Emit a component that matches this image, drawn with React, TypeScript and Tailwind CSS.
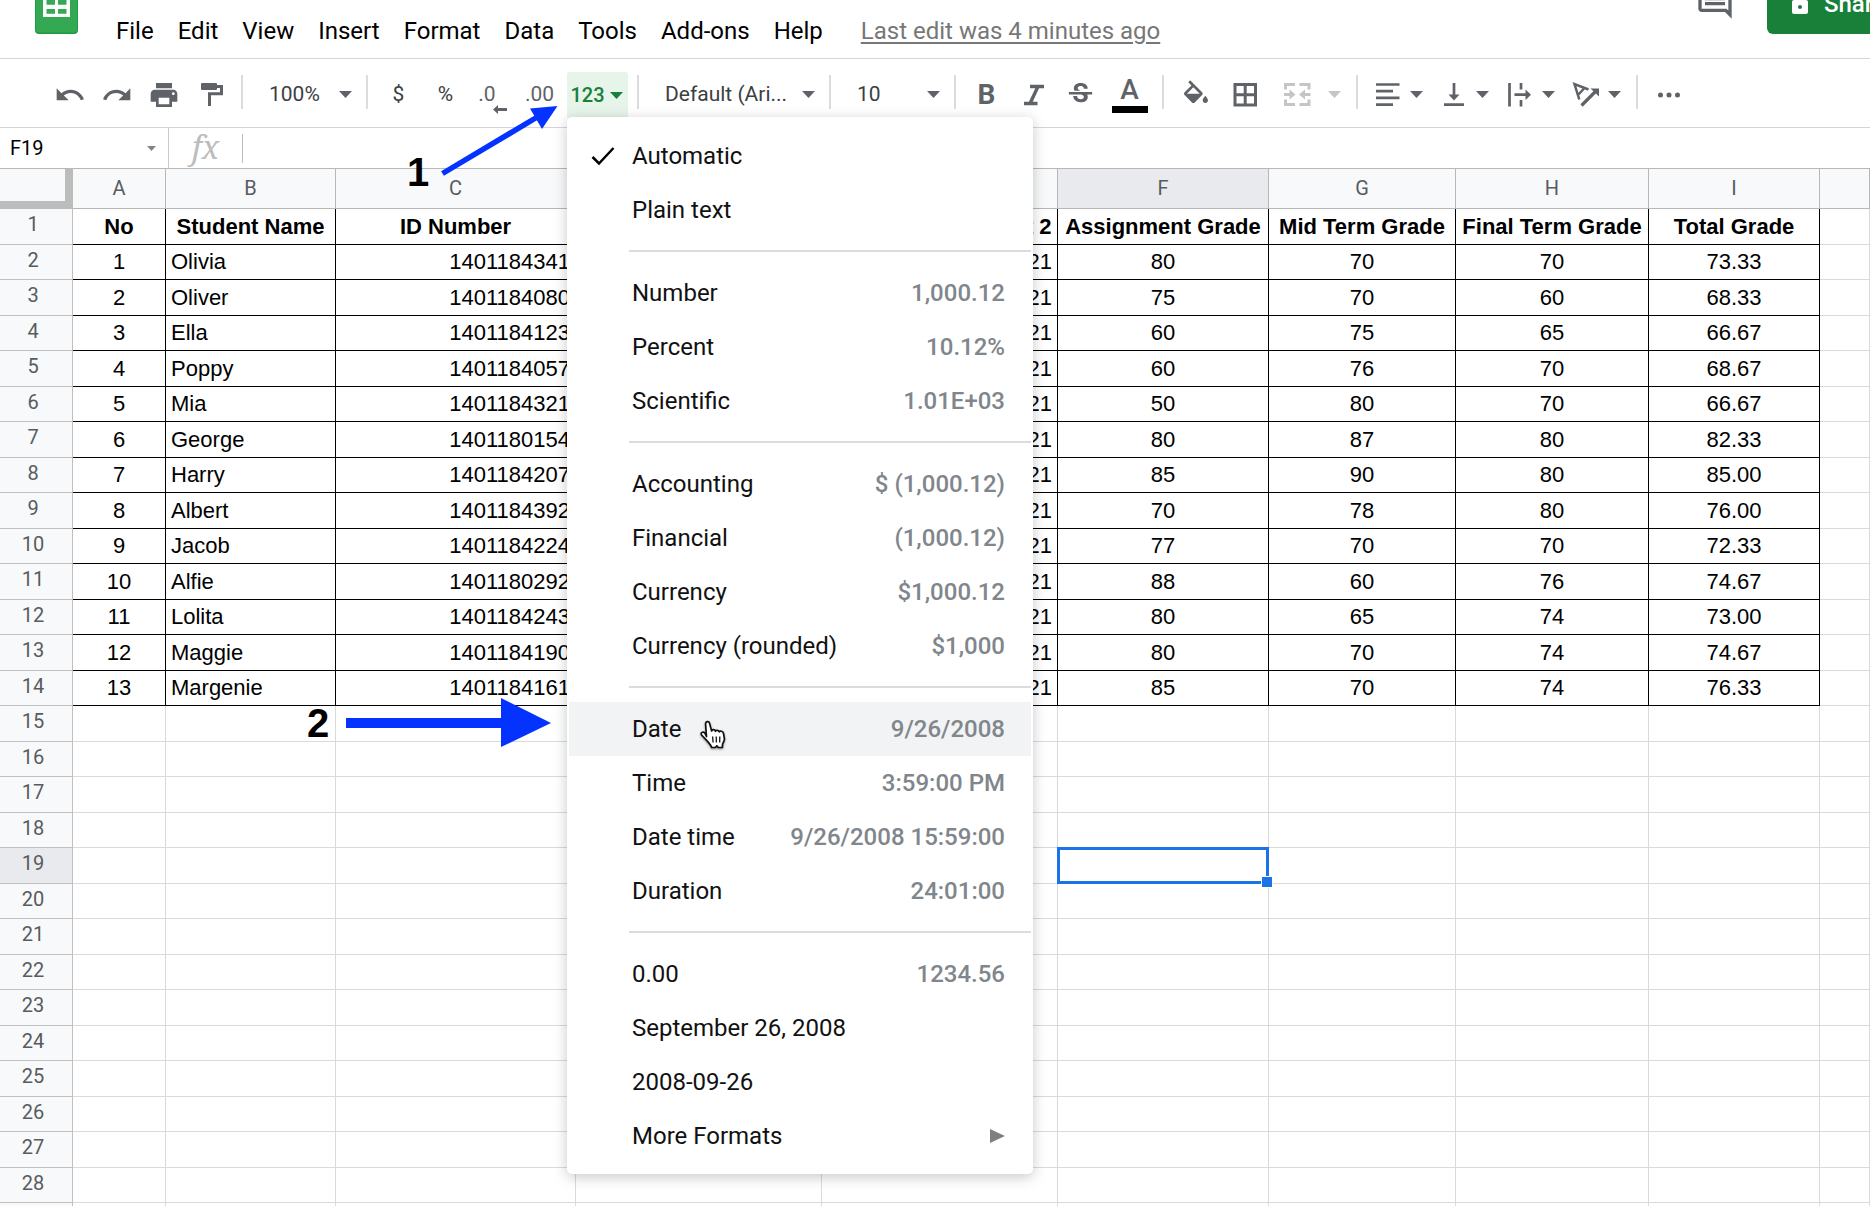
import type { ReactNode } from "react";
import { MdOutlineComment, MdLock, MdPrint, MdRedo, MdStrikethroughS, MdUndo } from "react-icons/md";

const menus = ["File", "Edit", "View", "Insert", "Format", "Data", "Tools", "Add-ons", "Help"];

const formatGroups = [
  [
    { label: "Automatic", checked: true },
    { label: "Plain text" },
  ],
  [
    { label: "Number", sample: "1,000.12" },
    { label: "Percent", sample: "10.12%" },
    { label: "Scientific", sample: "1.01E+03" },
  ],
  [
    { label: "Accounting", sample: "$ (1,000.12)" },
    { label: "Financial", sample: "(1,000.12)" },
    { label: "Currency", sample: "$1,000.12" },
    { label: "Currency (rounded)", sample: "$1,000" },
  ],
  [
    { label: "Date", sample: "9/26/2008", hovered: true },
    { label: "Time", sample: "3:59:00 PM" },
    { label: "Date time", sample: "9/26/2008 15:59:00" },
    { label: "Duration", sample: "24:01:00" },
  ],
  [
    { label: "0.00", sample: "1234.56" },
    { label: "September 26, 2008" },
    { label: "2008-09-26" },
    { label: "More Formats", submenu: true },
  ],
] as { label: string; sample?: string; checked?: boolean; hovered?: boolean; submenu?: boolean }[][];

const columns = ["A", "B", "C", "D", "E", "F", "G", "H", "I", ""];

const rows = [
  ["No", "Student Name", "ID Number", "", "Date of Assignment 2", "Assignment Grade", "Mid Term Grade", "Final Term Grade", "Total Grade"],
  ["1", "Olivia", "1401184341", "", "2021", "80", "70", "70", "73.33"],
  ["2", "Oliver", "1401184080", "", "2021", "75", "70", "60", "68.33"],
  ["3", "Ella", "1401184123", "", "2021", "60", "75", "65", "66.67"],
  ["4", "Poppy", "1401184057", "", "2021", "60", "76", "70", "68.67"],
  ["5", "Mia", "1401184321", "", "2021", "50", "80", "70", "66.67"],
  ["6", "George", "1401180154", "", "2021", "80", "87", "80", "82.33"],
  ["7", "Harry", "1401184207", "", "2021", "85", "90", "80", "85.00"],
  ["8", "Albert", "1401184392", "", "2021", "70", "78", "80", "76.00"],
  ["9", "Jacob", "1401184224", "", "2021", "77", "70", "70", "72.33"],
  ["10", "Alfie", "1401180292", "", "2021", "88", "60", "76", "74.67"],
  ["11", "Lolita", "1401184243", "", "2021", "80", "65", "74", "73.00"],
  ["12", "Maggie", "1401184190", "", "2021", "80", "70", "74", "74.67"],
  ["13", "Margenie", "1401184161", "", "2021", "85", "70", "74", "76.33"],
];

const rowNumbers = [...Array.from({ length: 28 }, (_, i) => String(i + 1)), ""];

function Caret({ className = "text-[#5f6368]" }: { className?: string }) {
  return (
    <svg aria-hidden width="13" height="7" viewBox="0 0 13 7" className={`shrink-0 ${className}`}>
      <path d="M0 0h13L6.500 7z" fill="currentColor" />
    </svg>
  );
}

function Glyph({ children }: { children: ReactNode }) {
  return (
    <svg aria-hidden width="32" height="32" viewBox="0 0 32 32" fill="none" stroke="currentColor" strokeWidth="2.7" className="shrink-0">
      {children}
    </svg>
  );
}

function Tool({ label, className = "w-[47px]", children }: { label: string; className?: string; children: ReactNode }) {
  return (
    <button type="button" aria-label={label} className={`flex h-[44px] shrink-0 items-center justify-center ${className}`}>
      {children}
    </button>
  );
}

function DropTool({ label, children }: { label: string; children: ReactNode }) {
  return (
    <button type="button" aria-label={label} className="flex h-[44px] w-[66px] shrink-0 items-center gap-[6px] pl-[7px]">
      <Glyph>{children}</Glyph>
      <Caret />
    </button>
  );
}

function Separator({ className = "mx-[7px]" }: { className?: string }) {
  return <div aria-hidden className={`mb-[6px] h-[34px] w-[2px] shrink-0 bg-[#dadce0] ${className}`} />;
}

function Picker({ label, value, className }: { label: string; value: string; className: string }) {
  return (
    <div className={`relative flex h-[44px] shrink-0 items-center ${className}`}>
      <select aria-label={label} className="h-full w-full appearance-none bg-transparent pl-[26px] text-[21px] text-[#3c4043] outline-none">
        <option>{value}</option>
      </select>
      <Caret className="pointer-events-none absolute right-[14px] text-[#5f6368]" />
    </div>
  );
}

function Header() {
  return (
    <header className="flex h-[59px] items-start overflow-hidden border-b border-[#d3d5d8] pl-[35px]">
      <svg aria-hidden width="43" height="34" viewBox="0 0 43 34" className="shrink-0">
        <path d="M0 0h43v30a4 4 0 0 1-4 4H4a4 4 0 0 1-4-4z" fill="#1e9b45" />
        <path d="M1 0h41v29a3.500 3.500 0 0 1-3.500 3.500h-34A3.500 3.500 0 0 1 1 29z" fill="#34a853" />
        <path d="M8 0h27v17H8z" fill="#fff" />
        <path d="M11.500 0H20v4.700h-8.500zM23 0h8.500v4.700H23zM11.500 9H20v4.700h-8.500zM23 9h8.500v4.700H23z" fill="#34a853" />
      </svg>
      <nav className="flex items-center gap-[24px] pt-[15px] pl-[38px] text-[24px] leading-[32px] whitespace-nowrap text-black">
        {menus.map((m) => (
          <button type="button" key={m}>
            {m}
          </button>
        ))}
        <a href="#history" className="ml-[14px] text-[#777] underline decoration-2 underline-offset-[3px]">
          Last edit was 4 minutes ago
        </a>
      </nav>
      <div className="-mr-[30px] ml-auto flex shrink-0 items-start gap-[32px]">
        <button type="button" aria-label="Open comment history" className="-mt-[18px] text-[#5f6368]">
          <MdOutlineComment size={40} />
        </button>
        <button type="button" className="-mt-[27px] flex h-[61px] w-[133px] items-center gap-[12px] rounded-[6px] bg-[#188038] pl-[21px] text-[24px] font-medium text-white">
          <MdLock size={24} className="shrink-0" />
          Share
        </button>
      </div>
    </header>
  );
}

function Toolbar() {
  return (
    <div className="flex h-[69px] items-center overflow-hidden border-b border-[#d3d5d8] pt-[3px] pl-[46px] text-[21px] text-[#5f6368]">
      <Tool label="Undo"><MdUndo size={32} /></Tool>
      <Tool label="Redo"><MdRedo size={32} /></Tool>
      <Tool label="Print"><MdPrint size={32} /></Tool>
      <Tool label="Paint format">
        <Glyph>
          <path d="M6 5a1 1 0 0 1 1-1h14a1 1 0 0 1 1 1v5a1 1 0 0 1-1 1H7a1 1 0 0 1-1-1z" fill="currentColor" stroke="none" />
          <path d="M22 7.500h4.500v7.300H14.500V27" strokeWidth="3" />
        </Glyph>
      </Tool>
      <Separator className="ml-[7px]" />
      <Picker label="Zoom" value="100%" className="w-[123px]" />
      <Separator className="mr-[7px]" />
      <Tool label="Format as currency"><span className="text-[#3c4043]">$</span></Tool>
      <Tool label="Format as percent"><span className="text-[#3c4043]">%</span></Tool>
      <Tool label="Decrease decimal places">
        <span className="relative pr-[11px]">
          .0
          <svg aria-hidden width="14" height="9" viewBox="0 0 14 9" className="absolute right-0 -bottom-[4px]">
            <path d="M14 3H5V0L0 4.500 5 9V6h9z" fill="currentColor" />
          </svg>
        </span>
      </Tool>
      <Tool label="Increase decimal places">.00</Tool>
      <button type="button" aria-expanded="true" className="mt-[1px] ml-[4px] flex h-[46px] w-[61px] shrink-0 items-center justify-center gap-[5px] rounded-t-[3px] bg-[#e6f4ea] pr-[2px] text-[20px] font-medium text-[#188038]">
        123
        <Caret className="text-[#188038]" />
      </button>
      <Separator className="ml-[9px]" />
      <Picker label="Font" value="Default (Ari..." className="w-[190px]" />
      <Separator className="" />
      <Picker label="Font size" value="10" className="w-[123px]" />
      <Separator className="mr-[7px]" />
      <Tool label="Bold"><span className="text-[28px] font-bold">B</span></Tool>
      <Tool label="Italic">
        <Glyph>
          <path d="M12 7.500h14M6 24.500h13.500M20 7.500 12 24.500" strokeWidth="3.400" />
        </Glyph>
      </Tool>
      <Tool label="Strikethrough"><MdStrikethroughS size={31} /></Tool>
      <Tool label="Text color" className="w-[51px]">
        <span className="flex flex-col items-center gap-[3px]">
          <span className="text-[28px] leading-[26px] font-medium">A</span>
          <span className="h-[7px] w-[36px] bg-black" />
        </span>
      </Tool>
      <Separator />
      <Tool label="Fill color" className="w-[49px]">
        <svg aria-hidden width="32" height="32" viewBox="0 -1 24 24" fill="currentColor">
          <path d="M16.560 8.940L7.620 0 6.210 1.410l2.380 2.380-5.150 5.150c-.59.59-.59 1.540 0 2.120l5.500 5.500c.29.29.68.44 1.060.44s.77-.15 1.060-.44l5.500-5.500c.59-.58.59-1.530 0-2.120zM5.210 10L10 5.210 14.790 10H5.210zM19 11.500s-2 2.170-2 3.500c0 1.100.9 2 2 2s2-.9 2-2c0-1.330-2-3.500-2-3.500z" />
        </svg>
      </Tool>
      <Tool label="Borders" className="w-[49px]">
        <Glyph>
          <path d="M6 5.500h20.500V26H6zM16.200 5.500V26M6 15.700h20.500" strokeWidth="3" />
        </Glyph>
      </Tool>
      <button type="button" disabled aria-label="Merge cells" className="flex h-[44px] w-[80px] shrink-0 items-center gap-[15px] pl-[12px] text-[#c4c5c7]">
        <Glyph>
          <path d="M4.500 10.500v-5H14M18.500 5.500H28v5M4.500 20.500v5H14M18.500 25.500H28v-5" strokeWidth="3" />
          <path d="M3 15.500h6M29.500 15.500h-6" strokeWidth="3" />
          <path d="M8.500 10.500l6 5-6 5zM24 10.500l-6 5 6 5z" fill="currentColor" stroke="none" />
        </Glyph>
        <Caret className="text-[#c4c5c7]" />
      </button>
      <Separator />
      <DropTool label="Horizontal align">
        <path d="M4 5.500h23.500M4 12.200h17M4 18.900h23.500M4 25.600h17" />
      </DropTool>
      <DropTool label="Vertical align">
        <path d="M16 4v13M6 25.600h20" />
        <path d="M10.500 15.500h11L16 21.500z" fill="currentColor" stroke="none" />
      </DropTool>
      <DropTool label="Text wrapping">
        <path d="M5.500 4v23.500M17 4v6.500M17 21v6.500M10.500 15.700H22" />
        <path d="M21.500 10.500l5.500 5.200-5.500 5.200z" fill="currentColor" stroke="none" />
      </DropTool>
      <DropTool label="Text rotation">
        <path d="M18.500 10.500 4.500 5l4.800 15.500M14.500 9 8 16" strokeWidth="2.500" />
        <path d="M11.500 26.500 26 12" strokeWidth="3.200" />
        <path d="M20.500 9.500h8.500v8z" fill="currentColor" stroke="none" />
      </DropTool>
      <Separator />
      <Tool label="More">
        <Glyph>
          <path d="M7.500 13.500a2.500 2.500 0 1 1 0 5 2.500 2.500 0 0 1 0-5zM16 13.500a2.500 2.500 0 1 1 0 5 2.500 2.500 0 0 1 0-5zM24.500 13.500a2.500 2.500 0 1 1 0 5 2.500 2.500 0 0 1 0-5z" fill="currentColor" stroke="none" />
        </Glyph>
      </Tool>
    </div>
  );
}

function FormulaBar() {
  return (
    <div className="flex h-[40px] items-center">
      <button type="button" aria-label="Name box" className="flex h-full w-[169px] items-center justify-between border-r border-[#c8cacd] pr-[12px] pl-[10px] text-[20px] text-black">
        F19
        <svg aria-hidden width="9" height="5" viewBox="0 0 9 5">
          <path d="M0 0h9L4.500 5z" fill="#80868b" />
        </svg>
      </button>
      <label htmlFor="formula" className="w-[73px] pb-[2px] text-center font-['Noto_Serif','Liberation_Serif',serif] text-[32px] leading-[36px] text-[#bdbdbd] italic">
        fx
      </label>
      <input id="formula" type="text" className="h-[29px] flex-1 border-l border-[#bdbdbd] px-3 text-[20px] outline-none" />
    </div>
  );
}

function cellAlign(row: number, col: number) {
  if (row === 0) return "text-center font-bold";
  if (col === 1) return "text-left pl-[5px]";
  if (col === 2 || col === 4) return "text-right pr-[5px]";
  return "text-center";
}

function Sheet() {
  return (
    <table className="w-full table-fixed border-separate border-spacing-0">
      <colgroup>
        <col className="w-[73px]" />
        <col className="w-[93px]" />
        <col className="w-[170px]" />
        <col className="w-[240px]" />
        <col className="w-[246px]" />
        <col className="w-[236px]" />
        <col className="w-[211px]" />
        <col className="w-[187px]" />
        <col className="w-[193px]" />
        <col className="w-[171px]" />
        <col />
      </colgroup>
      <thead>
        <tr className="h-[41px] text-[20px] text-[#575c61]">
          <td className="border-t border-r-8 border-b-8 border-t-[#b7b7b7] border-r-[#bcbcbc] border-b-[#bcbcbc] bg-[#f8f9fa] p-0" />
          {columns.map((c, i) => (
            <th
              key={i}
              scope="col"
              className={`border-t border-r border-b border-[#b7b7b7] p-0 pb-[2px] font-normal ${c === "F" ? "bg-[#e8eaed]" : "bg-[#f8f9fa]"}`}
            >
              {c}
            </th>
          ))}
        </tr>
      </thead>
      <tbody>
        {rowNumbers.map((n, r) => (
          <tr key={r} className="odd:h-[36px] even:h-[35px]">
            <th
              scope="row"
              className={`border-r border-b border-[#c0c0c0] p-0 pr-[6px] pb-[5px] text-[20px] leading-[24px] font-normal text-[#575c61] ${n === "19" ? "bg-[#e8eaed]" : "bg-[#f8f9fa]"}`}
            >
              {n}
            </th>
            {columns.map((c, i) => (
              <td
                key={i}
                className={`relative border-r border-b p-0 font-['Liberation_Sans',Arial,sans-serif] text-[22px] leading-[26px] whitespace-nowrap text-black ${cellAlign(r, i)} ${
                  r < rows.length && i < 9 ? "border-black" : "border-[#dadada]"
                }`}
              >
                {rows[r]?.[i]}
                {n === "19" && c === "F" && (
                  <>
                    <span className="absolute -inset-[1px] border-[3px] border-[#1a73e8]" />
                    <span className="absolute -right-[5px] -bottom-[5px] z-10 h-[12px] w-[12px] border border-white bg-[#1a73e8]" />
                  </>
                )}
              </td>
            ))}
          </tr>
        ))}
      </tbody>
    </table>
  );
}

function FormatMenu() {
  return (
    <div role="menu" className="absolute top-[117px] left-[567px] z-20 w-[466px] rounded-[5px] bg-white px-[2px] pt-[12px] pb-[11px] shadow-[0_3px_14px_rgba(0,0,0,0.22)]">
      {formatGroups.map((group, g) => (
        <div key={g}>
          {g > 0 && <div role="separator" className="mt-[13px] mb-[14px] ml-[60px] h-[2px] bg-[#dadce0]" />}
          {group.map((item) => (
            <button
              type="button"
              role="menuitem"
              key={item.label}
              className={`flex h-[54px] w-full items-center pr-[26px] text-[24px] text-[#111] ${item.hovered ? "bg-[#f1f3f4]" : ""}`}
            >
              <span className="flex w-[63px] shrink-0 justify-end pr-[17px]">
                {item.checked && (
                  <svg aria-hidden width="24" height="20" viewBox="0 0 24 20" fill="none" stroke="#000" strokeWidth="2.500">
                    <path d="M1.500 11 8 17.500 22.500 2" />
                  </svg>
                )}
              </span>
              {item.label}
              {item.sample && <span className="ml-auto font-medium text-[#80868b]">{item.sample}</span>}
              {item.submenu && (
                <svg aria-hidden width="15" height="14" viewBox="0 0 15 14" className="ml-auto">
                  <path d="M0 0v14l15-7z" fill="#808080" />
                </svg>
              )}
            </button>
          ))}
        </div>
      ))}
    </div>
  );
}

// Step markers and pointer drawn over the sheet
function Annotations() {
  return (
    <>
      <span className="absolute top-[149px] left-[407px] z-30 font-['Liberation_Sans',Arial,sans-serif] text-[40px] leading-[46px] font-bold text-black">1</span>
      <svg aria-hidden width="120" height="76" viewBox="0 0 120 76" className="absolute top-[103px] left-[439px] z-30">
        <path d="M3.500 70.500 100 13" stroke="#0433ff" strokeWidth="5.500" />
        <path d="M118.500 3 91 5.500 103 26z" fill="#0433ff" />
      </svg>
      <span className="absolute top-[700px] left-[307px] z-30 font-['Liberation_Sans',Arial,sans-serif] text-[40px] leading-[46px] font-bold text-black">2</span>
      <svg aria-hidden width="206" height="50" viewBox="0 0 206 50" className="absolute top-[698px] left-[346px] z-30">
        <path d="M0 20h155V0l50 25-50 24V30H0z" fill="#0433ff" />
      </svg>
      <svg aria-hidden width="26" height="30" viewBox="0 0 26 30" className="absolute top-[720px] left-[700px] z-30 drop-shadow-[0_1px_1px_rgba(0,0,0,0.4)]">
        <path
          d="M6.500 16.500 5.600 4.200C5.300 1.300 8.900.6 9.600 3.400l2 7.600c.3-1.800 3.400-1.800 3.900.3.500-1.600 3.200-1.300 3.700.6.800-1.300 3.800-.8 4.300 1.500l.9 5.200c.3 2.400-1.600 4-1.900 5.700l-.1 3.200h-4.200l-1.300-1.700-1.500 1.700h-3.700c-.5-2.600-3.200-4.600-4.800-6.900L1.600 15c-1.300-2.400 1.300-4 3.300-1.900z"
          fill="#fff"
          stroke="#111"
          strokeWidth="1.700"
          strokeLinejoin="round"
        />
        <path d="M12.600 16.500l.5 6M16.200 16.500l.2 6M19.800 16.500l-.1 6" stroke="#111" strokeWidth="1.300" />
      </svg>
    </>
  );
}

export default function App() {
  return (
    <div className="relative h-screen overflow-hidden bg-white font-[Roboto,sans-serif]">
      <Header />
      <Toolbar />
      <FormulaBar />
      <Sheet />
      <FormatMenu />
      <Annotations />
    </div>
  );
}
